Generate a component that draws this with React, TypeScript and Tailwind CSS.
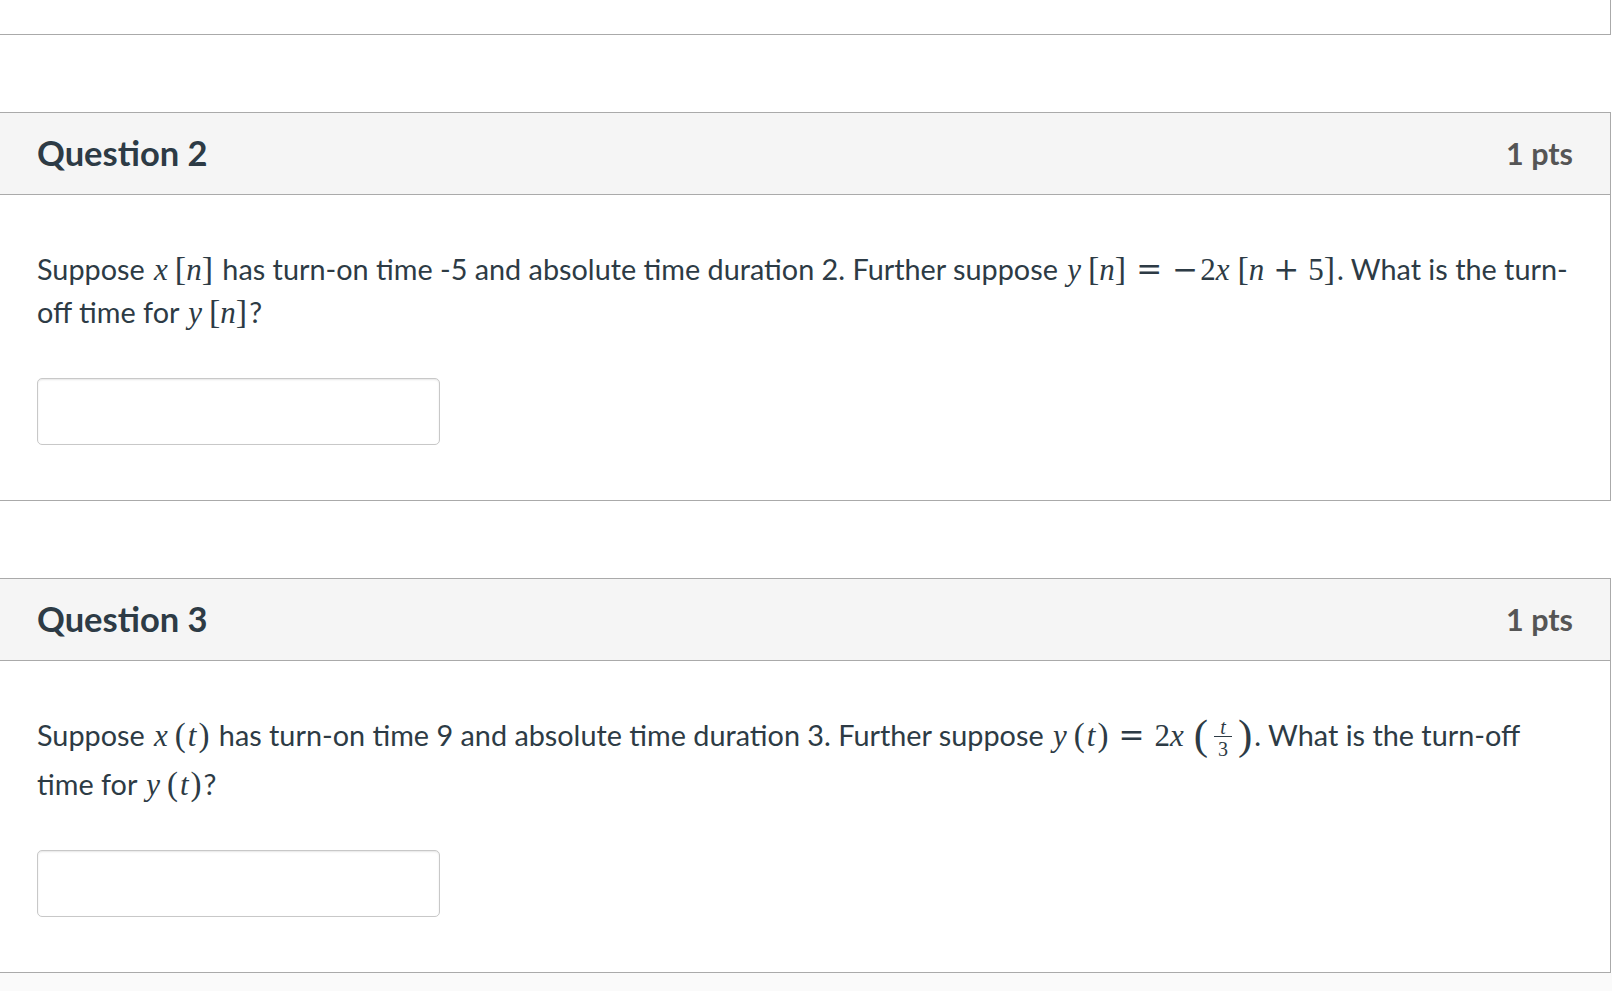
import React from "react";

type C = { children: React.ReactNode; className?: string };

const MI = ({ children, className = "" }: C) => (
  <span className={"font-['Liberation_Serif',serif] italic text-[31px] leading-none " + className}>{children}</span>
);
const MN = ({ children, className = "" }: C) => (
  <span className={"font-['Liberation_Serif',serif] text-[31px] leading-none " + className}>{children}</span>
);
const Br = ({ children, className = "" }: C) => (
  <span className={"font-['Liberation_Serif',serif] text-[34px] leading-none " + className}>{children}</span>
);
const Op = ({ children, className = "" }: C) => (
  <span className={"font-['DejaVu_Serif',serif] text-[31px] leading-none " + className}>{children}</span>
);

const Card = ({ title, children }: { title: string; children: React.ReactNode }) => (
  <div className="w-[1611px] border-y border-r border-[#aaaaaa] bg-white">
    <div className="h-[82px] bg-[#f5f5f5] border-b border-[#aaaaaa] px-[37px] flex items-center justify-between">
      <span className="text-[34.5px] font-bold text-[#2d3b45] leading-none">{title}</span>
      <span className="text-[30.5px] font-bold text-[#555555] leading-none">1 pts</span>
    </div>
    {children}
  </div>
);

const Input = () => (
  <div className="w-[403px] h-[67px] rounded-[5px] border border-[#c8c8c8] bg-white shadow-[inset_0_1px_2px_rgba(0,0,0,0.1)]" />
);

const XN = ({ v }: { v: string }) => (
  <span className="mx-[2px]">
    <MI>{v}</MI>
    <Br className="ml-[7px]">[</Br>
    <MI>n</MI>
    <Br>]</Br>
  </span>
);

const Paren = ({ children, className = "" }: C) => (
  <span className={"font-['Liberation_Serif',serif] text-[33px] leading-[20px] " + className}>{children}</span>
);

const XT = ({ v }: { v: string }) => (
  <span className="mx-[2px]">
    <MI>{v}</MI>
    <Paren className="ml-[7px]">(</Paren>
    <MI className="px-[2px]">t</MI>
    <Paren>)</Paren>
  </span>
);

export default function App() {
  return (
    <div className="min-h-screen bg-[#fafafa] font-['Lato','Noto_Sans',sans-serif] text-[#2d3b45]">
      <div className="bg-white">
        <div className="h-[35px] w-[1611px] border-b border-r border-[#aaaaaa]" />
        <div className="h-[77px]" />
        <Card title="Question 2">
          <div className="px-[37px] pt-[53px] pb-[55px]">
            <p className="text-[28.8px] leading-[43px] whitespace-nowrap">
              Suppose <XN v="x" /> has turn-on time -5 and absolute time duration 2. Further suppose{" "}
              <span className="mx-[2px]">
                <MI>y</MI>
                <Br className="ml-[7px]">[</Br>
                <MI>n</MI>
                <Br>]</Br>
                <Op className="mx-[10px]">=</Op>
                <Op>−</Op>
                <MN className="ml-[2px]">2</MN>
                <MI>x</MI>
                <Br className="ml-[8px]">[</Br>
                <MI>n</MI>
                <Op className="mx-[9px]">+</Op>
                <MN>5</MN>
                <Br>]</Br>
              </span>
              . What is the turn-
              <br />
              off time for <XN v="y" />?
            </p>
            <div className="mt-[44px]">
              <Input />
            </div>
          </div>
        </Card>
        <div className="h-[77px]" />
        <Card title="Question 3">
          <div className="px-[37px] pt-[53px] pb-[55px]">
            <p className="text-[28.8px] leading-[43px] whitespace-nowrap">
              <span className="inline-block w-0 h-[49px] align-[-17px]"></span>
              Suppose <XT v="x" /> has turn-on time 9 and absolute time duration 3. Further suppose{" "}
              <span className="mx-[2px]">
                <MI>y</MI>
                <Paren className="ml-[7px]">(</Paren>
                <MI className="px-[2px]">t</MI>
                <Paren>)</Paren>
                <Op className="mx-[10px]">=</Op>
                <MN>2</MN>
                <MI>x</MI>
                <span className="font-['Liberation_Serif',serif] text-[43px] leading-[20px] relative top-[3px] ml-[10px]">(</span>
                <span className="inline-flex flex-col items-center align-[12px] mx-[6px] font-['Liberation_Serif',serif] text-[20px]">
                  <span className="italic leading-[17px] px-[4px]">t</span>
                  <span className="leading-[17px] pt-[4px] border-t border-[#2d3b45] px-[4px]">3</span>
                </span>
                <span className="font-['Liberation_Serif',serif] text-[43px] leading-[20px] relative top-[3px]">)</span>
              </span>
              . What is the turn-off
              <br />
              time for <XT v="y" />?
            </p>
            <div className="mt-[44px]">
              <Input />
            </div>
          </div>
        </Card>
      </div>
    </div>
  );
}
